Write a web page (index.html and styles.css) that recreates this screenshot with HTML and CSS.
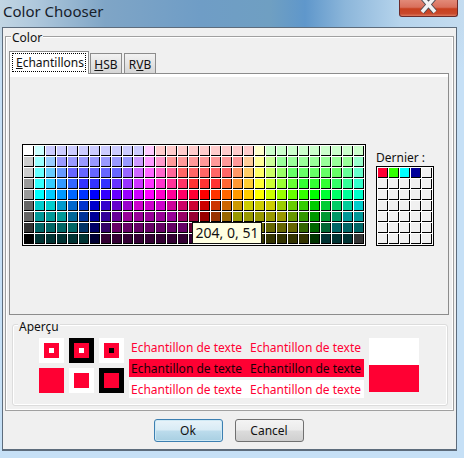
FILE: index.html
```html
<!DOCTYPE html>
<html lang="en">
<head>
    <meta charset="UTF-8">
    <meta name="viewport" content="width=device-width, initial-scale=1.0">
    <title>Color Chooser</title>
    <link rel="stylesheet" href="styles.css">
</head>
<body>
    <div class="window">
        <!-- Title bar -->
        <div class="titlebar">
            <span class="title">Color Chooser</span>
            <div class="close">
                <svg width="17" height="14" viewBox="0 0 17 14">
                    <path d="M2 -3 L15 12 M15 -3 L2 12" stroke="#4a4a52" stroke-width="5.4" fill="none"/>
                    <path d="M2 -3 L15 12 M15 -3 L2 12" stroke="#f2f2f2" stroke-width="3.6" fill="none"/>
                </svg>
            </div>
        </div>

        <div class="dialog">
            <div class="group">
                <span class="group-title">Color</span>

                <!-- Tabs -->
                <div class="tabs">
                    <div class="tab active"><span class="focus"><u>E</u>chantillons</span></div>
                    <div class="tab"><u>H</u>SB</div>
                    <div class="tab">R<u>V</u>B</div>
                </div>
                <div class="tab-panel">
                    <div class="swatches" id="main-swatches">
                        <div class="tooltip">204, 0, 51</div>
                    </div>
                    <div class="recent">
                        <div class="recent-label">Dernier :</div>
                        <div class="swatches" id="recent-swatches"></div>
                    </div>
                </div>

                <!-- Preview -->
                <div class="preview">
                    <span class="preview-title">Aperçu</span>
                    <div class="squares">
                        <div class="sq white"><div class="sq-in red"><div class="dot white"></div></div></div>
                        <div class="sq black"><div class="sq-in red"><div class="dot white"></div></div></div>
                        <div class="sq white"><div class="sq-in red"><div class="dot black"></div></div></div>
                        <div class="sq red"></div>
                        <div class="sq white"><div class="sq-in red"></div></div>
                        <div class="sq black"><div class="sq-in red"></div></div>
                    </div>
                    <div class="samples">
                        <div class="sample"><span>Echantillon de texte</span><span>Echantillon de texte</span></div>
                        <div class="sample on-red"><span>Echantillon de texte</span><span>Echantillon de texte</span></div>
                        <div class="sample on-white"><span>Echantillon de texte</span><span>Echantillon de texte</span></div>
                    </div>
                    <div class="flag">
                        <div class="flag-top"></div>
                        <div class="flag-bottom"></div>
                    </div>
                </div>
            </div>

            <div class="buttons">
                <button class="btn default">Ok</button>
                <button class="btn">Cancel</button>
            </div>
        </div>
    </div>

    <script src="script.js"></script>
</body>
</html>
```

FILE: styles.css
```css
html, body {
    margin: 0;
    padding: 0;
}
body {
    width: 464px;
    height: 458px;
    overflow: hidden;
    font-family: "Noto Sans", sans-serif;
    font-size: 12px;
    color: #111;
    background:
        linear-gradient(180deg, transparent 27px, #c6e0f6 70px),
        linear-gradient(90deg, #c2d6e4 0, #afc8dc 35px, #7fa5c6 105px, #6f9dc6 200px, #6f9fc2 270px, #5f97cb 305px, #8cb6da 345px, #b6d4ec 400px, #c4dcf0 464px);
}
.window {
    height: 458px;
    box-sizing: border-box;
    padding: 0 7px 7px 2px;
    display: flex;
    flex-direction: column;
}
.titlebar {
    height: 27px;
    flex: none;
    display: flex;
    justify-content: space-between;
    align-items: flex-start;
}
.title {
    font-size: 15px;
    line-height: 23px;
    margin-left: 1px;
    color: #16202a;
}
.close {
    width: 59px;
    height: 17px;
    box-sizing: border-box;
    margin-right: -1px;
    border: 1px solid #6b2a2a;
    border-top: none;
    border-radius: 0 0 3px 3px;
    background: linear-gradient(180deg, #e28a78 0, #d9705c 45%, #c8401f 55%, #c9492c 85%, #dc7a60 100%);
    display: flex;
    justify-content: center;
    align-items: flex-start;
}
.dialog {
    flex: 1;
    box-sizing: border-box;
    border: 1px solid #5d6c7c;
    border-bottom-width: 2px;
    background: #f0f0f0;
    display: flex;
    flex-direction: column;
    padding: 8px 2px 0 2px;
}

/* Color group */
.group {
    position: relative;
    height: 375px;
    flex: none;
    box-sizing: border-box;
    border: 1px solid #a0a0a0;
    box-shadow: inset 0 0 0 1px #fff;
    padding: 14px 4px 0 3px;
}
.group-title {
    position: absolute;
    top: -9px;
    left: 5px;
    padding: 0 1px;
    line-height: 20px;
    background: #f0f0f0;
}
.tabs {
    display: flex;
    align-items: flex-end;
    height: 22px;
    position: relative;
    z-index: 1;
    gap: 1px;
}
.tab {
    height: 20px;
    width: 32px;
    box-sizing: border-box;
    border: 1px solid #8c8c8c;
    border-bottom: none;
    background: linear-gradient(180deg, #f2f2f2, #d6d6d6);
    text-align: center;
    line-height: 21px;
}
.tab:nth-child(3) {
    margin-left: 1px;
}
.tab.active {
    width: 80px;
    height: 23px;
    margin-bottom: -1px;
    background: #fff;
    padding: 1px 2px 2px;
}
.focus {
    display: block;
    height: 19px;
    border: 1px dotted #000;
    padding-left: 2px;
    line-height: 17px;
    box-sizing: border-box;
    white-space: nowrap;
}
.tab-panel {
    height: 242px;
    box-sizing: border-box;
    border: 1px solid #8c8c8c;
    box-shadow: inset 0 3px 0 #fff;
    padding: 70px 0 0 12px;
    display: flex;
    align-items: flex-end;
    padding-bottom: 68px;
    gap: 10px;
}
.swatches {
    position: relative;
    display: grid;
    gap: 1px;
    padding: 1px;
    border: 1px solid #000;
    background: #fff;
}
#main-swatches {
    grid-template-columns: repeat(31, 10px);
}
#recent-swatches {
    grid-template-columns: repeat(5, 10px);
}
.swatch {
    width: 10px;
    height: 10px;
    box-sizing: border-box;
    border-right: 1px solid #000;
    border-bottom: 1px solid #000;
}
.tooltip {
    position: absolute;
    left: 169px;
    top: 77px;
    width: 70px;
    height: 22px;
    box-sizing: border-box;
    border: 1px solid #111;
    background: #ffffe1;
    font-size: 14px;
    line-height: 19px;
    text-align: center;
    white-space: nowrap;
}
.recent-label {
    line-height: 16px;
    margin-bottom: 0;
    white-space: nowrap;
}

/* Aperçu */
.preview {
    position: relative;
    height: 82px;
    box-sizing: border-box;
    margin: 9px 1px 0 3px;
    border: 1px solid #dcdcdc;
    border-radius: 3px;
    box-shadow: inset 0 0 0 1px #fff;
    padding: 13px 0 0 26px;
    display: flex;
    gap: 5px;
    align-items: flex-start;
}
.preview-title {
    position: absolute;
    top: -7px;
    left: 5px;
    padding: 0 1px;
    line-height: 18px;
    background: #f0f0f0;
}
.squares {
    display: grid;
    grid-template-columns: repeat(3, 25px);
    grid-auto-rows: 25px;
    gap: 5px;
}
.sq {
    padding: 5px;
    box-sizing: border-box;
}
.sq-in {
    height: 15px;
    padding: 5px;
    box-sizing: border-box;
}
.dot {
    height: 5px;
}
.white { background: #fff; }
.black { background: #000; }
.red { background: #ff0033; }
.samples {
    width: 235px;
    display: flex;
    flex-direction: column;
    gap: 3px;
}
.sample {
    height: 18px;
    line-height: 20px;
    padding-left: 2px;
    display: flex;
    color: #ff0033;
}
.sample span {
    flex: none;
    width: 119px;
    white-space: nowrap;
}
.on-red {
    background: #ff0033;
    color: #1a0006;
}
.on-white {
    background: #fff;
}
.flag {
    width: 50px;
}
.flag-top {
    height: 27px;
    background: #fff;
}
.flag-bottom {
    height: 27px;
    background: #ff0033;
}

/* Buttons */
.buttons {
    display: flex;
    justify-content: center;
    gap: 12px;
    margin: 8px 2px 0 0;
}
.btn {
    width: 69px;
    height: 23px;
    padding: 0;
    box-sizing: border-box;
    font: 12px "Noto Sans", sans-serif;
    color: #111;
    border: 1px solid #707070;
    border-radius: 3px;
    background: linear-gradient(180deg, #f4f4f4 0, #ebebeb 48%, #dcdcdc 52%, #cfcfcf 100%);
}
.btn.default {
    border-color: #3c7fb1;
    box-shadow: inset 0 0 0 1px #cfe9f5;
    background: linear-gradient(180deg, #e8f3f9 0, #d8ebf5 48%, #bcdcec 52%, #a8cfe2 100%);
}
```

FILE: script.js
```js
const mainRows = [
    'FFF CFF CCF*9 FCF FCC*9 FFC CFC*9',
    'CCC 9FF 9CF 99F*7 C9F F9F F9C F99*7 FC9 FF9 CF9 9F9*7 9FC',
    'CCC 6FF 6CF 69F 66F*5 96F C6F F6F F6C F69 F66*5 F96 FC6 FF6 CF6 9F6 6F6*5 6F9 6FC',
    '999 3FF 3CF 39F 36F 33F*3 63F 93F C3F F3F F3C F39 F36 F33*3 F63 F93 FC3 FF3 CF3 9F3 6F3 3F3*3 3F6 3F9 3FC',
    '999 0FF 0CF 09F 06F 03F 00F 30F 60F 90F C0F F0F F0C F09 F06 F03 F00 F30 F60 F90 FC0 FF0 CF0 9F0 6F0 3F0 0F0 0F3 0F6 0F9 0FC',
    '666 0CC*2 09C 06C 03C 00C 30C 60C 90C C0C*3 C09 C06 C03 C00 C30 C60 C90 CC0*3 9C0 6C0 3C0 0C0 0C3 0C6 0C9 0CC',
    '666 099*3 069 039 009 309 609 909*5 906 903 900 930 960 990*5 690 390 090 093 096 099*2',
    '333 066*4 036 006 306 606*7 603 600 630 660*7 360 060 063 066*3',
    '000 033*5 003 303*9 300 330*9 030 033*3 333'
];
const recentColors = ['#ff0033', '#33ff00', '#00ffff', '#000099'];

function addSwatch(parent, color) {
    const cell = document.createElement('div');
    cell.className = 'swatch';
    cell.style.background = color;
    parent.insertBefore(cell, parent.querySelector('.tooltip'));
}

const mainGrid = document.getElementById('main-swatches');
mainRows.forEach(row => {
    row.split(' ').forEach(part => {
        const [hex, count] = part.split('*');
        for (let i = 0; i < (count || 1); i++) {
            addSwatch(mainGrid, '#' + hex);
        }
    });
});

const recentGrid = document.getElementById('recent-swatches');
for (let i = 0; i < 35; i++) {
    addSwatch(recentGrid, recentColors[i] || '#f0f0f0');
}
```
